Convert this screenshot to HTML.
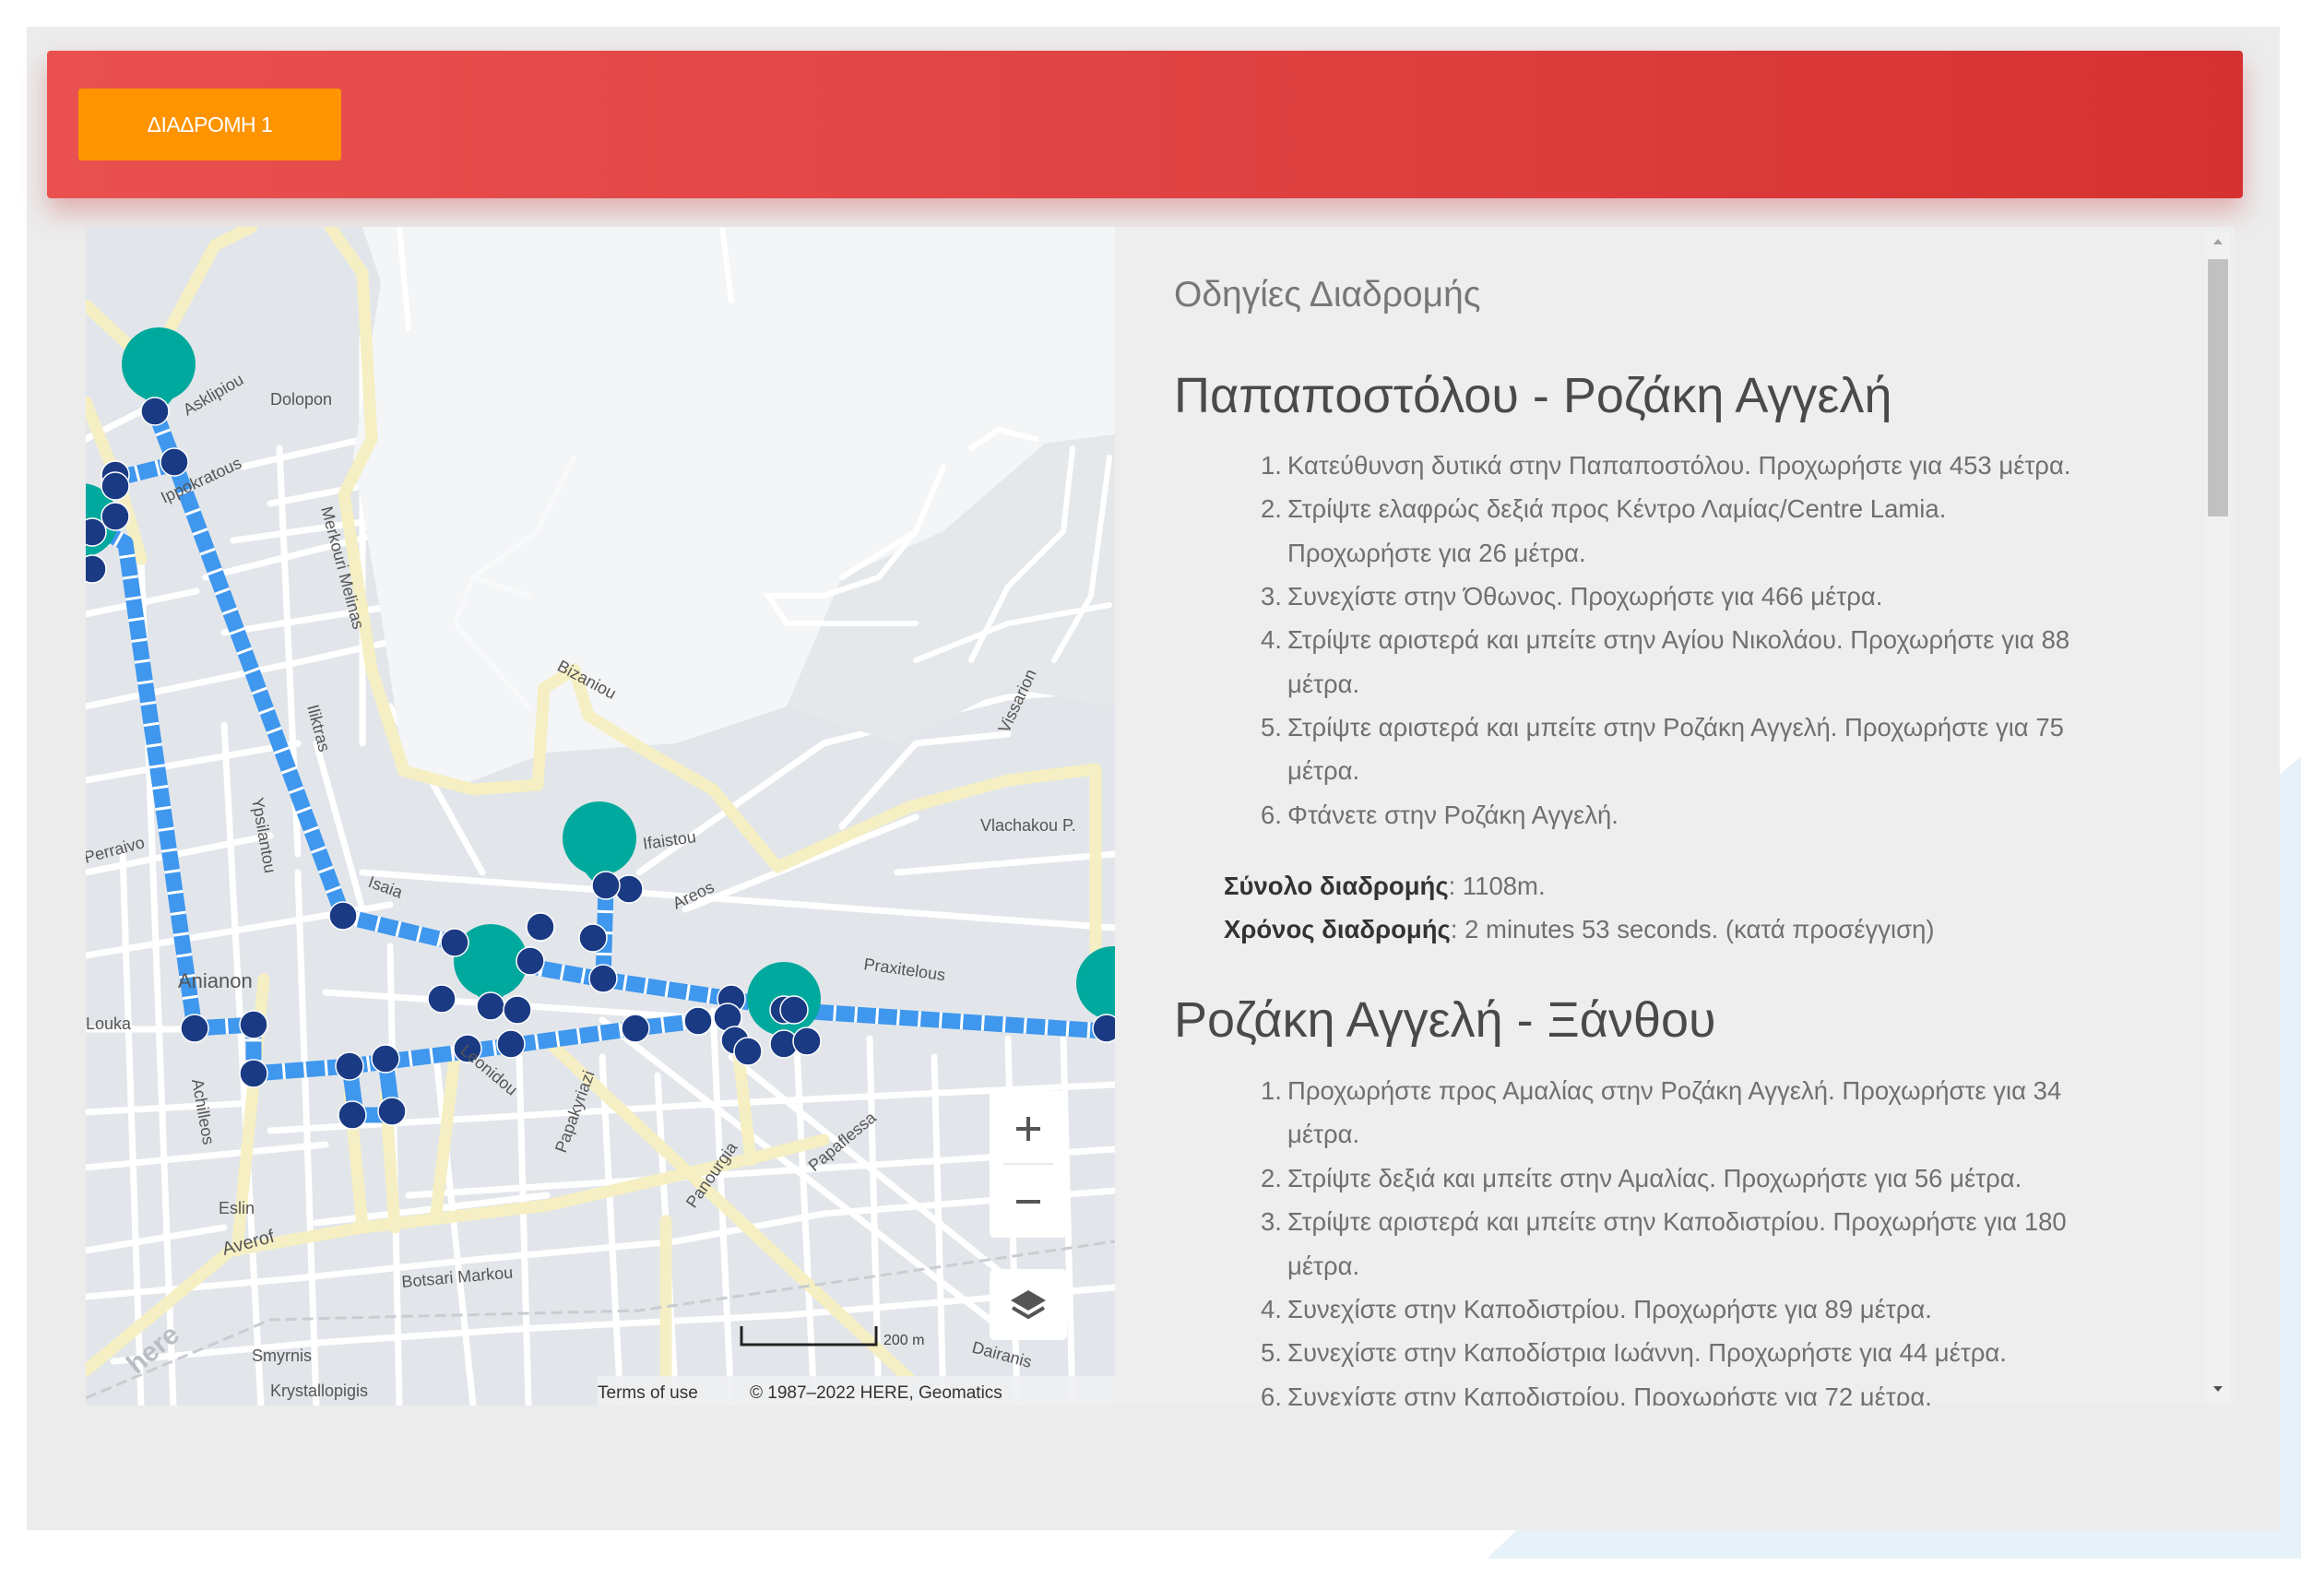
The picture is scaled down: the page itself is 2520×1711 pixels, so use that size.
<!DOCTYPE html>
<html><head><meta charset="utf-8"><style>
*{margin:0;padding:0;box-sizing:border-box}
body{width:2520px;height:1711px;background:#fff;position:relative;overflow:hidden;font-family:"Liberation Sans","Noto Sans CJK SC",sans-serif}
.abs{position:absolute}
#lb{left:0;top:0}
#cont{left:29px;top:29px;width:2443px;height:1630px;background:#ececec}
#hdr{left:51px;top:55px;width:2381px;height:160px;border-radius:4px;background:linear-gradient(90deg,#e9504f,#e04343 50%,#d63131);box-shadow:0 14px 28px rgba(200,60,60,.35)}
#btn{left:85px;top:96px;width:285px;height:78px;background:#fd9400;border-radius:3px;color:#fff;font-size:23px;text-align:center;line-height:78px;letter-spacing:-0.5px}
#map{left:93px;top:246px;width:1116px;height:1278px;overflow:hidden}
#panel{left:1209px;top:246px;width:1214px;height:1278px;overflow:hidden;background:#eeeeee}
.t{position:absolute;white-space:nowrap;color:#707070;font-size:27.5px;line-height:47px}
.n{position:absolute;white-space:nowrap;color:#707070;font-size:27.5px;line-height:47px}
.h2{position:absolute;white-space:nowrap;color:#4a4a4a;font-size:54px;line-height:60px}
#sb{left:2391px;top:252px;width:27px;height:1268px;background:#f1f1f1}
#th{left:2394px;top:281px;width:22px;height:279px;background:#c1c1c1}
</style></head><body>
<svg id="lb" class="abs" width="2520" height="1711"><polygon points="1612,1690 1645,1659 2472,1659 2472,840 2495,820 2495,1690" fill="#e7f1f8"/></svg>
<div id="cont" class="abs"></div>
<div id="hdr" class="abs"></div>
<div id="btn" class="abs">ΔΙΑΔΡΟΜΗ 1</div>

<div id="map" class="abs">
<svg width="1116" height="1278" viewBox="0 0 1116 1278" font-family="Liberation Sans, sans-serif">
<rect width="1116" height="1278" fill="#e2e6ea"/>
<g stroke="#fff" stroke-width="7" fill="none" stroke-linecap="round">
<path d="M0,230 L60,200 M0,420 L120,395 M0,520 L240,470 L420,430 M0,600 L230,560 M0,700 L200,660 M0,790 L330,735 M0,870 L120,870 M0,960 L180,950 M0,1020 L260,995 M0,1110 L150,1085 M0,1160 L230,1140 L420,1120 L640,1100 L800,1070 L1116,1045"/>
<path d="M30,1230 L250,1210 L470,1195 L760,1180 L1116,1150"/>
<path d="M170,260 L390,210 M200,300 L410,260 M160,340 L300,320 M130,380 L330,330 M150,440 L340,410"/>
<path d="M210,240 L230,680 M300,120 L300,560 M350,100 L350,470 M60,360 L95,1278 M40,680 L60,1278 M150,540 L190,1278 M230,700 L250,1278 M330,780 L340,1278 M380,900 L420,1278 M470,900 L480,1278 M560,900 L580,1278 M620,920 L640,1278 M680,850 L700,1278 M770,870 L790,1278 M850,880 L860,1278 M920,900 L930,1278 M1000,880 L1010,1278 M1060,880 L1070,1278"/>
<path d="M300,700 L1116,760 M260,830 L700,860 M200,980 L700,950 L1116,930 M350,1050 L1116,1000 M250,1080 L500,1050"/>
<path d="M500,882 L893,1249 M560,860 L1000,1200 M700,900 L1050,1180 M330,520 L430,700 M250,560 L300,740"/>
<path d="M600,700 L800,560 L1000,510 L1116,500 M650,740 L900,640 M820,650 L900,560 L1000,550 M880,700 L1116,680"/>
</g>
<path d="M300,0 L1116,0 L1116,225 L1040,235 L930,330 L820,380 L760,520 L640,560 L500,570 L395,610 L345,585 L320,420 L290,250 L320,60 Z" fill="#f3f5f7"/>
<path d="M760,520 L820,380 L930,330 L1040,235 L1116,225 L1116,520 L1000,500 L880,560 Z" fill="#e4e8eb"/>
<g stroke="#fff" stroke-width="6" fill="none" stroke-linecap="round">
<path d="M340,0 L350,110 M690,0 L700,80 M930,260 L900,330 L860,380 L800,400 L740,400 L760,430 L900,430 M960,240 L990,220 L1030,230 M1070,240 L1060,330 L1000,390 L960,470 M1110,250 L1090,400 L1050,470 M820,380 L900,330 M900,470 L1000,430 L1110,410"/>
<path d="M530,250 L490,330 L420,380 L400,430 L480,520 M420,380 L480,400" stroke="#f8f9fa" stroke-width="5"/>
</g>
<g stroke="#f5efc3" stroke-width="13" fill="none" stroke-linecap="round" stroke-linejoin="round">
<path d="M0,85 L70,150 L140,20 L180,0"/>
<path d="M0,190 L40,290 L60,360"/>
<path d="M265,0 L300,50 L310,230 L280,290 L310,480 L345,590 L420,610 L490,605 L497,500 L530,480 L545,530 L610,570 L680,610 L750,694 L893,629 L1000,600 L1095,588 L1095,830"/>
<path d="M0,1240 L157,1110 L300,1085 L500,1061 L714,1012 L800,990"/>
<path d="M500,882 L893,1249"/>
<path d="M286,939 L300,1085 M325,940 L335,1085 M629,1078 L629,1278 M707,890 L721,1012 M193,816 L164,1110 M400,900 L380,1070"/>
</g>
<g stroke="#c9cdd1" stroke-width="3" stroke-dasharray="12 6" fill="none"><path d="M0,1270 L200,1185 L600,1175 L1116,1100"/></g>
<g fill="none" stroke-linejoin="round" stroke-linecap="butt">
<g stroke="#3f97ee" stroke-width="17">
<path d="M75,200 L96,255 L279,747 L400,776 L493,804 L561,816 L700,837 L757,849 L1120,873"/>
<path d="M14,327 L43,343 L118,869 L182,865 L182,918 L286,910 L414,894 L596,869 L664,861"/>
<path d="M564,718 L561,816 M286,910 L293,963 L329,963 M325,902 L332,959 M32,273 L96,257"/>
</g>
<g stroke="#fff" stroke-width="17" stroke-dasharray="3 20">
<path d="M75,200 L96,255 L279,747 L400,776 L493,804 L561,816 L700,837 L757,849 L1120,873"/>
<path d="M14,327 L43,343 L118,869 L182,865 L182,918 L286,910 L414,894 L596,869 L664,861"/>
<path d="M564,718 L561,816 M32,273 L96,257"/>
</g>
</g>
<g fill="#00a99d">
<circle cx="79" cy="149" r="40"/><path d="M55,175 L79,205 L103,175Z"/>
<circle cx="557" cy="663" r="40"/><path d="M533,690 L557,718 L581,690Z"/>
<circle cx="439" cy="796" r="40"/><path d="M415,822 L439,850 L463,822Z"/>
<circle cx="757" cy="837" r="40"/>
<circle cx="1114" cy="820" r="40"/>
<circle cx="-5" cy="318" r="40"/>
</g>
<g fill="#1b3a84" stroke="#fff" stroke-width="1.5">
<circle cx="75" cy="200" r="15"/><circle cx="96" cy="255" r="15"/><circle cx="32" cy="269" r="15"/><circle cx="32" cy="281" r="15"/><circle cx="32" cy="314" r="15"/><circle cx="7" cy="331" r="15"/><circle cx="7" cy="371" r="15"/><circle cx="279" cy="747" r="15"/><circle cx="400" cy="776" r="15"/><circle cx="493" cy="759" r="15"/><circle cx="550" cy="771" r="15"/><circle cx="589" cy="718" r="15"/><circle cx="564" cy="714" r="15"/><circle cx="482" cy="796" r="15"/><circle cx="561" cy="815" r="15"/><circle cx="386" cy="837" r="15"/><circle cx="439" cy="845" r="15"/><circle cx="468" cy="849" r="15"/><circle cx="461" cy="886" r="15"/><circle cx="414" cy="891" r="15"/><circle cx="325" cy="902" r="15"/><circle cx="286" cy="910" r="15"/><circle cx="289" cy="963" r="15"/><circle cx="332" cy="959" r="15"/><circle cx="182" cy="865" r="15"/><circle cx="118" cy="869" r="15"/><circle cx="182" cy="918" r="15"/><circle cx="596" cy="869" r="15"/><circle cx="664" cy="861" r="15"/><circle cx="700" cy="837" r="15"/><circle cx="696" cy="857" r="15"/><circle cx="704" cy="882" r="15"/><circle cx="718" cy="894" r="15"/><circle cx="757" cy="886" r="15"/><circle cx="782" cy="883" r="15"/><circle cx="757" cy="849" r="15"/><circle cx="768" cy="849" r="15"/><circle cx="1107" cy="869" r="15"/>
</g>
<g fill="#555" font-size="18">
<text x="200" y="193">Dolopon</text>
<text x="255" y="305" transform="rotate(75 255 305)">Merkouri Melinas</text>
<text x="510" y="480" transform="rotate(28 510 480)">Bizaniou</text>
<text x="605" y="675" transform="rotate(-8 605 675)">Ifaistou</text>
<text x="843" y="805" transform="rotate(8 843 805)">Praxitelous</text>
<text x="970" y="655">Vlachakou P.</text>
<text x="100" y="825" font-size="22">Anianon</text>
<text x="0" y="870">Louka</text>
<text x="150" y="1115" transform="rotate(-15 150 1115)" font-size="20">Averof</text>
<text x="343" y="1150" transform="rotate(-5 343 1150)">Botsari Markou</text>
<text x="180" y="1230">Smyrnis</text>
<text x="200" y="1268">Krystallopigis</text>
<text x="144" y="1070">Eslin</text>
<text x="405" y="895" transform="rotate(40 405 895)">Leonidou</text>
<text x="660" y="1065" transform="rotate(-55 660 1065)">Panourgia</text>
<text x="640" y="740" transform="rotate(-25 640 740)">Areos</text>
<text x="305" y="715" transform="rotate(20 305 715)">Isaia</text>
<text x="85" y="300" transform="rotate(-25 85 300)">Ippokratous</text>
<text x="110" y="205" transform="rotate(-30 110 205)">Asklipiou</text>
<text x="1000" y="550" transform="rotate(-65 1000 550)">Vissarion</text>
<text x="0" y="690" transform="rotate(-15 0 690)">Perraivo</text>
<text x="790" y="1025" transform="rotate(-40 790 1025)">Papaflessa</text>
<text x="960" y="1220" transform="rotate(15 960 1220)">Dairanis</text>
<text x="240" y="520" transform="rotate(75 240 520)">Iliktras</text>
<text x="180" y="620" transform="rotate(80 180 620)">Ypsilantou</text>
<text x="115" y="925" transform="rotate(80 115 925)">Achilleos</text>
<text x="520" y="1005" transform="rotate(-70 520 1005)">Papakyriazi</text>
</g>
<text x="55" y="1245" transform="rotate(-40 55 1245)" font-size="30" font-weight="bold" fill="#b9bec4">here</text>
<rect x="555" y="1246" width="561" height="32" fill="#eef0f2" opacity="0.9"/>
<text x="555" y="1270" font-size="19" fill="#333">Terms of use</text>
<text x="720" y="1270" font-size="19" fill="#333">© 1987–2022 HERE, Geomatics</text>
<path d="M711,1192 L711,1212 L857,1212 L857,1192" stroke="#222" stroke-width="3" fill="none"/>
<text x="865" y="1212" font-size="16" fill="#444">200 m</text>
<rect x="980" y="937" width="84" height="159" rx="6" fill="#fff"/>
<line x1="995" y1="1016" x2="1049" y2="1016" stroke="#e4e4e4" stroke-width="1.5"/>
<path d="M1022,965 L1022,991 M1009,978 L1035,978" stroke="#555" stroke-width="4"/>
<path d="M1009,1057 L1035,1057" stroke="#555" stroke-width="4"/>
<rect x="980" y="1130" width="84" height="77" rx="6" fill="#fff"/>
<path d="M1022,1153 L1041,1164 L1022,1175 L1003,1164Z" fill="#555"/>
<path d="M1005,1172 L1022,1182 L1039,1172" stroke="#555" stroke-width="4" fill="none"/>
</svg>
</div>

<div id="panel" class="abs">
<div class="t" style="left:64px;top:52px;font-size:39px;color:#777;line-height:44px">Οδηγίες Διαδρομής</div>
<div class="h2" style="left:64px;top:153px">Παπαποστόλου - Ροζάκη Αγγελή</div>
<div class="n" style="left:158px;top:235px">1.</div><div class="t" style="left:187px;top:235px">Κατεύθυνση δυτικά στην Παπαποστόλου. Προχωρήστε για 453 μέτρα.</div>
<div class="n" style="left:158px;top:282px">2.</div><div class="t" style="left:187px;top:282px">Στρίψτε ελαφρώς δεξιά προς Κέντρο Λαμίας/Centre Lamia.</div>
<div class="t" style="left:187px;top:330px">Προχωρήστε για 26 μέτρα.</div>
<div class="n" style="left:158px;top:377px">3.</div><div class="t" style="left:187px;top:377px">Συνεχίστε στην Όθωνος. Προχωρήστε για 466 μέτρα.</div>
<div class="n" style="left:158px;top:424px">4.</div><div class="t" style="left:187px;top:424px">Στρίψτε αριστερά και μπείτε στην Αγίου Νικολάου. Προχωρήστε για 88</div>
<div class="t" style="left:187px;top:472px">μέτρα.</div>
<div class="n" style="left:158px;top:519px">5.</div><div class="t" style="left:187px;top:519px">Στρίψτε αριστερά και μπείτε στην Ροζάκη Αγγελή. Προχωρήστε για 75</div>
<div class="t" style="left:187px;top:566px">μέτρα.</div>
<div class="n" style="left:158px;top:614px">6.</div><div class="t" style="left:187px;top:614px">Φτάνετε στην Ροζάκη Αγγελή.</div>
<div class="t" style="left:118px;top:691px"><b style="color:#333">Σύνολο διαδρομής</b>: 1108m.</div>
<div class="t" style="left:118px;top:738px"><b style="color:#333">Χρόνος διαδρομής</b>: 2 minutes 53 seconds. (κατά προσέγγιση)</div>
<div class="h2" style="left:64px;top:830px">Ροζάκη Αγγελή - Ξάνθου</div>
<div class="n" style="left:158px;top:913px">1.</div><div class="t" style="left:187px;top:913px">Προχωρήστε προς Αμαλίας στην Ροζάκη Αγγελή. Προχωρήστε για 34</div>
<div class="t" style="left:187px;top:960px">μέτρα.</div>
<div class="n" style="left:158px;top:1008px">2.</div><div class="t" style="left:187px;top:1008px">Στρίψτε δεξιά και μπείτε στην Αμαλίας. Προχωρήστε για 56 μέτρα.</div>
<div class="n" style="left:158px;top:1055px">3.</div><div class="t" style="left:187px;top:1055px">Στρίψτε αριστερά και μπείτε στην Καποδιστρίου. Προχωρήστε για 180</div>
<div class="t" style="left:187px;top:1103px">μέτρα.</div>
<div class="n" style="left:158px;top:1150px">4.</div><div class="t" style="left:187px;top:1150px">Συνεχίστε στην Καποδιστρίου. Προχωρήστε για 89 μέτρα.</div>
<div class="n" style="left:158px;top:1197px">5.</div><div class="t" style="left:187px;top:1197px">Συνεχίστε στην Καποδίστρια Ιωάννη. Προχωρήστε για 44 μέτρα.</div>
<div class="n" style="left:158px;top:1245px">6.</div><div class="t" style="left:187px;top:1245px">Συνεχίστε στην Καποδιστρίου. Προχωρήστε για 72 μέτρα.</div>
</div>
<div id="sb" class="abs"></div>
<div id="th" class="abs"></div>
<svg class="abs" style="left:2398px;top:256px" width="14" height="12"><path d="M2,9 L7,3 L12,9Z" fill="#a0a0a0"/></svg>
<svg class="abs" style="left:2398px;top:1500px" width="14" height="12"><path d="M2,3 L7,9 L12,3Z" fill="#505050"/></svg>
</body></html>
